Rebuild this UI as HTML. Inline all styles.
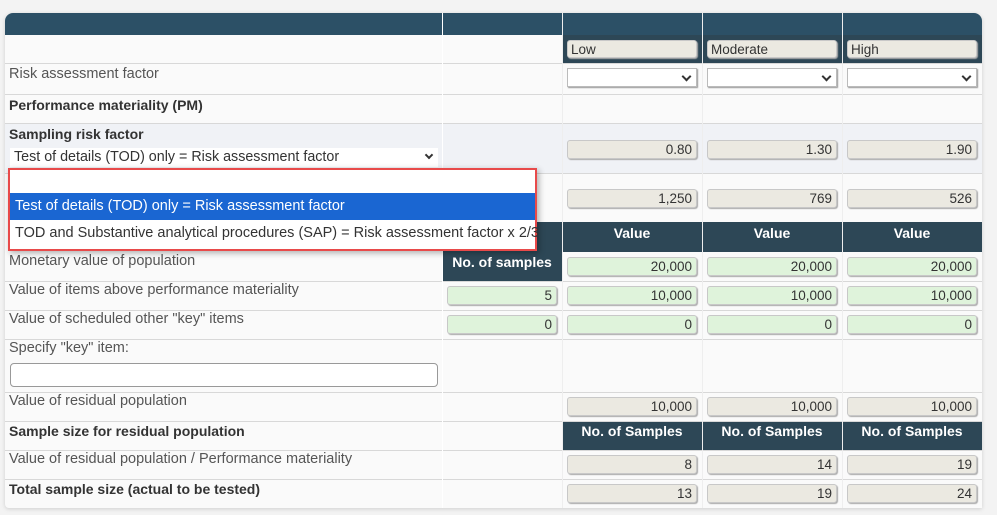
<!DOCTYPE html>
<html><head><style>
*{box-sizing:border-box;margin:0;padding:0}
body{width:997px;height:515px;background:#f3f3f3;font-family:"Liberation Sans",sans-serif;font-size:13.5px;color:#333;position:relative;overflow:hidden}
.a{position:absolute}
.tbl{left:5px;top:13px;width:977px;height:495px;background:#fafafa;border-radius:8px 8px 0 4px;overflow:hidden;box-shadow:0 1px 4px rgba(0,0,0,.15)}
.hl{height:1px;background:#d8d8d8;left:0;width:977px}
.vl{width:1px;background:#e4e4e4;top:0;height:495px}
.dk{background:#2d4756}
.lbl{left:9px;color:#555;font-size:14.5px;white-space:nowrap}
.b{font-weight:bold;color:#333;font-size:14px}
.inp{height:19px;border:1px solid #c8c8c8;border-radius:3px;text-align:right;padding-right:4px;font-size:13.5px;line-height:17px;color:#333;box-shadow:1px 1px 1px #aaa}
.g{background:#ebe9e1}
.gr{background:#dff3db}
.sel{background:#fff;border:1px solid #bbb;height:19px;box-shadow:1px 1px 1px #999}
.sel:after{content:"";position:absolute;right:6px;top:4px;width:5px;height:5px;border-right:2px solid #333;border-bottom:2px solid #333;transform:rotate(45deg)}
.hd{color:#fff;font-weight:bold;text-align:center;font-size:14px}
</style></head><body>
<div class="a tbl">
  <div class="a" style="left:0;top:110px;width:977px;height:50px;background:#f0f2f6"></div>
  <div class="a" style="left:0;top:0;width:977px;height:22px;background:#2c5066"></div>
  <div class="a dk" style="left:557px;top:22px;width:420px;height:28px"></div>
  <div class="a dk" style="left:557px;top:209px;width:420px;height:30px"></div>
  <div class="a dk" style="left:437px;top:209px;width:120px;height:59px"></div>
  <div class="a dk" style="left:557px;top:408px;width:420px;height:29px"></div>
  <div class="a hl" style="top:50px"></div><div class="a hl" style="top:81px"></div>
  <div class="a hl" style="top:110px"></div><div class="a hl" style="top:160px"></div>
  <div class="a hl" style="top:268px"></div><div class="a hl" style="top:297px"></div>
  <div class="a hl" style="top:326px"></div><div class="a hl" style="top:379px"></div>
  <div class="a hl" style="top:408px"></div><div class="a hl" style="top:437px"></div>
  <div class="a hl" style="top:466px"></div>
  <div class="a vl" style="left:437px;background:#fff"></div><div class="a vl" style="left:557px;background:#eee"></div>
  <div class="a vl" style="left:697px;background:#eee"></div><div class="a vl" style="left:837px;background:#eee"></div>
</div>
<div class="a inp g" style="left:567px;top:40px;width:130px;height:18px;text-align:left;padding-left:3px">Low</div>
<div class="a inp g" style="left:707px;top:40px;width:130px;height:18px;text-align:left;padding-left:3px">Moderate</div>
<div class="a inp g" style="left:847px;top:40px;width:130px;height:18px;text-align:left;padding-left:3px">High</div>
<div class="a sel" style="left:567px;top:68px;width:130px"></div>
<div class="a sel" style="left:707px;top:68px;width:130px"></div>
<div class="a sel" style="left:847px;top:68px;width:130px"></div>

<div class="a lbl" style="top:66px">Risk assessment factor</div>
<div class="a lbl b" style="top:97px">Performance materiality (PM)</div>
<div class="a lbl b" style="top:126px">Sampling risk factor</div>
<div class="a" style="left:10px;top:148px;width:428px;height:19px;background:#fff;padding-left:4px;line-height:19px;color:#333;font-size:14.3px">Test of details (TOD) only = Risk assessment factor<span class="a" style="right:6px;top:4px;width:6px;height:6px;border-right:2px solid #333;border-bottom:2px solid #333;transform:rotate(45deg)"></span></div>
<div class="a inp g" style="left:567px;top:140px;width:130px">0.80</div>
<div class="a inp g" style="left:707px;top:140px;width:130px">1.30</div>
<div class="a inp g" style="left:847px;top:140px;width:130px">1.90</div>
<div class="a inp g" style="left:567px;top:189px;width:130px">1,250</div>
<div class="a inp g" style="left:707px;top:189px;width:130px">769</div>
<div class="a inp g" style="left:847px;top:189px;width:130px">526</div>

<div class="a hd" style="left:562px;top:225px;width:140px">Value</div>
<div class="a hd" style="left:702px;top:225px;width:140px">Value</div>
<div class="a hd" style="left:842px;top:225px;width:140px">Value</div>
<div class="a hd" style="left:442px;top:254px;width:120px">No. of samples</div>

<div class="a lbl" style="top:253px">Monetary value of population</div>
<div class="a inp gr" style="left:567px;top:257px;width:130px">20,000</div>
<div class="a inp gr" style="left:707px;top:257px;width:130px">20,000</div>
<div class="a inp gr" style="left:847px;top:257px;width:130px">20,000</div>

<div class="a lbl" style="top:282px">Value of items above performance materiality</div>
<div class="a inp gr" style="left:447px;top:286px;width:110px">5</div>
<div class="a inp gr" style="left:567px;top:286px;width:130px">10,000</div>
<div class="a inp gr" style="left:707px;top:286px;width:130px">10,000</div>
<div class="a inp gr" style="left:847px;top:286px;width:130px">10,000</div>

<div class="a lbl" style="top:311px">Value of scheduled other "key" items</div>
<div class="a inp gr" style="left:447px;top:315px;width:110px">0</div>
<div class="a inp gr" style="left:567px;top:315px;width:130px">0</div>
<div class="a inp gr" style="left:707px;top:315px;width:130px">0</div>
<div class="a inp gr" style="left:847px;top:315px;width:130px">0</div>

<div class="a lbl" style="top:340px">Specify "key" item:</div>
<div class="a" style="left:10px;top:363px;width:428px;height:24px;background:#fff;border:1px solid #999;border-radius:4px"></div>

<div class="a lbl" style="top:393px">Value of residual population</div>
<div class="a inp g" style="left:567px;top:397px;width:130px">10,000</div>
<div class="a inp g" style="left:707px;top:397px;width:130px">10,000</div>
<div class="a inp g" style="left:847px;top:397px;width:130px">10,000</div>

<div class="a lbl b" style="top:423px">Sample size for residual population</div>
<div class="a hd" style="left:562px;top:423px;width:140px">No. of Samples</div>
<div class="a hd" style="left:702px;top:423px;width:140px">No. of Samples</div>
<div class="a hd" style="left:842px;top:423px;width:140px">No. of Samples</div>

<div class="a lbl" style="top:451px">Value of residual population / Performance materiality</div>
<div class="a inp g" style="left:567px;top:455px;width:130px">8</div>
<div class="a inp g" style="left:707px;top:455px;width:130px">14</div>
<div class="a inp g" style="left:847px;top:455px;width:130px">19</div>

<div class="a lbl b" style="top:481px">Total sample size (actual to be tested)</div>
<div class="a inp g" style="left:567px;top:484px;width:130px">13</div>
<div class="a inp g" style="left:707px;top:484px;width:130px">19</div>
<div class="a inp g" style="left:847px;top:484px;width:130px">24</div>

<div class="a" style="left:8px;top:168px;width:529px;height:83px;border:2px solid #e84a4a;background:#fff;box-shadow:2px 2px 6px rgba(0,0,0,.3)">
  <div class="a" style="left:0;top:23px;width:525px;height:27px;background:#1a66d2;color:#fff;line-height:27px;padding-left:5px;font-size:14.5px">Test of details (TOD) only = Risk assessment factor</div>
  <div class="a" style="left:0;top:50px;width:525px;height:27px;line-height:27px;padding-left:5px;font-size:14.5px;color:#333;white-space:nowrap">TOD and Substantive analytical procedures (SAP) = Risk assessment factor x 2/3</div>
</div>
</body></html>
